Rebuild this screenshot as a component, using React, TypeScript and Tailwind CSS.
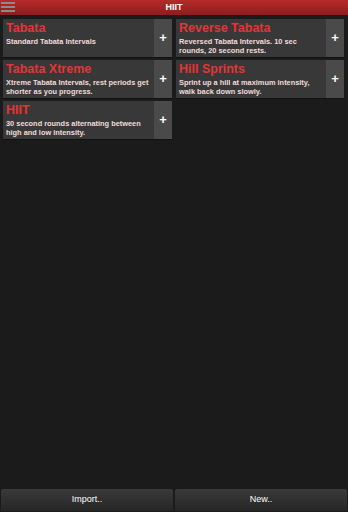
import React from 'react';

type Workout = { title: string; description: string };

const workouts: Workout[] = [
  { title: 'Tabata', description: 'Standard Tabata Intervals' },
  { title: 'Reverse Tabata', description: 'Reversed Tabata Intervals. 10 sec rounds, 20 second rests.' },
  { title: 'Tabata Xtreme', description: 'Xtreme Tabata Intervals, rest periods get shorter as you progress.' },
  { title: 'Hill Sprints', description: 'Sprint up a hill at maximum intensity, walk back down slowly.' },
  { title: 'HIIT', description: '30 second rounds alternating between high and low intensity.' },
];

const WorkoutCard: React.FC<{ workout: Workout }> = ({ workout }) => (
  <div className="flex min-h-[38px] bg-[#383838] shadow-[0_1px_0_#111]">
    <div className="flex-1 px-[3px] pt-[2px] pb-[2px]">
      <div className="text-[12.5px] leading-[15px] font-bold text-[#e23636]">{workout.title}</div>
      <div className="mt-[1px] text-[7.4px] leading-[9px] font-bold text-[#f2dcdc]">{workout.description}</div>
    </div>
    <button className="flex w-[18px] items-center justify-center bg-[#4a4a4a] text-[13px] font-bold text-white">
      +
    </button>
  </div>
);

export default function App() {
  return (
    <div className="flex h-[512px] w-[348px] flex-col bg-[#1b1b1b] font-['Liberation_Sans',Arial,sans-serif]">
      <header className="relative flex h-[16px] items-center justify-center border-b border-[#3a0c0c] bg-gradient-to-b from-[#b8292b] to-[#8c1d1e]">
        <div className="absolute top-[2px] left-[1px] flex flex-col gap-[2px]">
          <span className="h-[2px] w-[14px] bg-[#8a8a8a]" />
          <span className="h-[2px] w-[14px] bg-[#8a8a8a]" />
          <span className="h-[2px] w-[14px] bg-[#8a8a8a]" />
        </div>
        <span className="text-[9px] font-bold text-white">HIIT</span>
      </header>
      <main className="flex-1 px-[3px] pt-[3px]">
        <div className="grid grid-cols-[169px_168px] gap-x-[4px] gap-y-[3px]">
          {workouts.map((w) => (
            <WorkoutCard key={w.title} workout={w} />
          ))}
        </div>
      </main>
      <footer className="flex gap-[2px] px-[1px] pb-[1px]">
        <button className="h-[22px] flex-1 rounded-t-[2px] bg-gradient-to-b from-[#3a3a3a] to-[#262626] text-[9px] text-white">
          Import..
        </button>
        <button className="h-[22px] flex-1 rounded-t-[2px] bg-gradient-to-b from-[#3a3a3a] to-[#262626] text-[9px] text-white">
          New..
        </button>
      </footer>
    </div>
  );
}
